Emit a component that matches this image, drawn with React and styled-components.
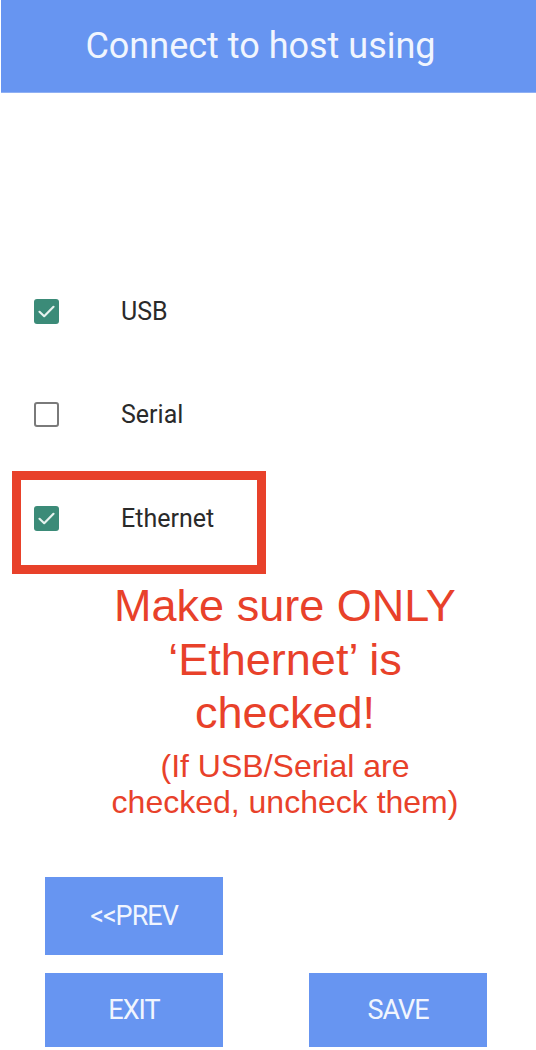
import React from 'react';
import styled, { createGlobalStyle } from 'styled-components';

const GlobalStyle = createGlobalStyle`
    body{
        margin: 0;
        background: #ffffff;
        font-family: Roboto, "Liberation Sans", sans-serif;
    }
`

const options = [
    { label: 'USB', checked: true },
    { label: 'Serial', checked: false },
]

const Check = ({ checked }) => (
    <CheckBox $checked={checked}>
        {checked && (
            <svg width="25" height="25" viewBox="0 0 25 25">
                <path d="M5.5 12.8 L10.2 17.2 L19.5 7.8" fill="none" stroke="#e6f2ee" strokeWidth="2.2" strokeLinecap="round" strokeLinejoin="round" />
            </svg>
        )}
    </CheckBox>
)

const App = () => {
    return(
        <Page>
            <GlobalStyle />
            <Header>Connect to host using</Header>
            <OptionList>
                {options.map((opt) => (
                    <OptionRow key={opt.label}>
                        <Check checked={opt.checked} />
                        <OptionLabel>{opt.label}</OptionLabel>
                    </OptionRow>
                ))}
                <Highlight>
                    <OptionRow $boxed>
                        <Check checked />
                        <OptionLabel>Ethernet</OptionLabel>
                    </OptionRow>
                </Highlight>
            </OptionList>
            <Note>
                <NoteTitle>Make sure ONLY<br />‘Ethernet’ is<br />checked!</NoteTitle>
                <NoteSub>(If USB/Serial are<br />checked, uncheck them)</NoteSub>
            </Note>
            <Buttons>
                <ButtonRow>
                    <ActionButton $height={78}>&lt;&lt;PREV</ActionButton>
                </ButtonRow>
                <ButtonRow>
                    <ActionButton $height={74}>EXIT</ActionButton>
                    <ActionButton $height={74}>SAVE</ActionButton>
                </ButtonRow>
            </Buttons>
        </Page>
    )
}

export default App;

const Page = styled.div`
    width: 536px;
    min-height: 1050px;
    background: #ffffff;
`
const Header = styled.header`
    height: 93px;
    margin-left: 1px;
    background-color: #6795f1;
    border-bottom: 1px solid #8fb0f4;
    box-sizing: border-box;
    display: flex;
    align-items: center;
    justify-content: center;
    padding-right: 16px;
    color: #f1f5fe;
    font-size: 36px;
    font-weight: 400;
`
const OptionList = styled.div`
    padding-top: 167px;
    display: flex;
    flex-direction: column;
`
const OptionRow = styled.div`
    display: flex;
    align-items: center;
    height: ${props => props.$boxed ? '85px' : '103px'};
    padding-left: ${props => props.$boxed ? '13px' : '34px'};
    padding-bottom: ${props => props.$boxed ? '9px' : '0'};
    box-sizing: border-box;
`
const CheckBox = styled.div`
    width: 25px;
    height: 25px;
    border-radius: 3px;
    box-sizing: border-box;
    display: flex;
    align-items: center;
    justify-content: center;
    background: ${props => props.$checked ? '#3b8b78' : '#ffffff'};
    border: ${props => props.$checked ? 'none' : '2.5px solid #7a7a7a'};
`
const OptionLabel = styled.span`
    margin-left: 62px;
    font-size: 25px;
    color: #2a2a2a;
`
const Highlight = styled.div`
    margin: 5px 0 0 12px;
    width: 254px;
    height: 103px;
    border: 9px solid #e8412a;
    box-sizing: border-box;
`
const Note = styled.div`
    padding-left: 34px;
    text-align: center;
    color: #e8412a;
    font-family: "Liberation Sans", Arial, sans-serif;
`
const NoteTitle = styled.p`
    margin: 5px 0 0 0;
    font-size: 45px;
    line-height: 53.5px;
`
const NoteSub = styled.p`
    margin: 8px 0 0 0;
    font-size: 32px;
    line-height: 36px;
`
const Buttons = styled.div`
    margin-top: 57px;
    padding: 0 49px 0 45px;
    display: flex;
    flex-direction: column;
    gap: 18px;
`
const ButtonRow = styled.div`
    display: flex;
    justify-content: space-between;
`
const ActionButton = styled.button`
    width: 178px;
    height: ${props => props.$height}px;
    border: none;
    border-radius: 0;
    background-color: #6795f1;
    color: #f1f5fe;
    font-family: Roboto, "Liberation Sans", sans-serif;
    font-size: 27px;
    letter-spacing: -1px;
    padding: 0;
`
